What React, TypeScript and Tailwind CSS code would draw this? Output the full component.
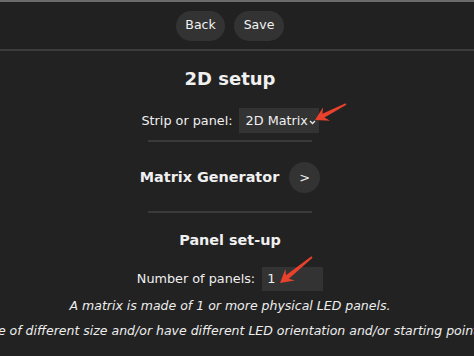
import React from "react";

function Arrow({ tip, tail }: { tip: [number, number]; tail: [number, number] }) {
  const dx = tail[0] - tip[0];
  const dy = tail[1] - tip[1];
  const len = Math.hypot(dx, dy);
  const ux = dx / len;
  const uy = dy / len;
  const nx = -uy;
  const ny = ux;
  const L = 13;
  const W = 7.5;
  const p = (a: number, b: number) => `${tip[0] + ux * a + nx * b},${tip[1] + uy * a + ny * b}`;
  const q = (b: number) => `${tail[0] + nx * b},${tail[1] + ny * b}`;
  const pts = [p(0, 0), p(L, W), p(L - 3.5, 2.2), q(0.9), q(-0.9), p(L - 3.5, -2.2), p(L, -W)].join(" ");
  return <polygon points={pts} fill="#e8412c" />;
}

export default function App() {
  return (
    <div className="w-[474px] h-[356px] overflow-hidden bg-[#222222] relative font-['DejaVu_Sans',Verdana,sans-serif] text-[#f0f0f0]">
      <div className="border-t-2 border-[#6b6b6b] border-b-2 border-b-[#3c3c3c] bg-[#212121]">
        <div className="w-[460px] h-[47px] flex items-center justify-center gap-[9px]">
          <button className="w-[49px] h-[30px] rounded-full bg-[#333333] text-[12.5px] text-[#f2f2f2]">Back</button>
          <button className="w-[50px] h-[30px] rounded-full bg-[#333333] text-[12.5px] text-[#f2f2f2]">Save</button>
        </div>
      </div>
      <div className="w-[460px] flex flex-col items-center">
        <div className="mt-[17px] text-[18px] leading-[22px] font-bold">2D setup</div>
        <div className="mt-[18px] flex items-center gap-[6px] text-[12.8px]">
          <span>Strip or panel:</span>
          <div className="w-[80px] h-[25px] bg-[#333333] flex items-center pl-[7px]">
            <span>2D Matrix</span>
            <svg width="7" height="5" viewBox="0 0 7 5" className="ml-[1px] mt-[3px]">
              <path d="M1 1 L3.5 3.5 L6 1" stroke="#e8e8e8" strokeWidth="1.3" fill="none" />
            </svg>
          </div>
        </div>
        <div className="mt-[7px] w-[164px] h-[2px] bg-[#3a3a3a]" />
        <div className="mt-[20px] flex items-center gap-[10px]">
          <span className="text-[14.4px] font-bold">Matrix Generator</span>
          <div className="w-[31px] h-[31px] rounded-full bg-[#333333] flex items-center justify-center text-[13px]">&gt;</div>
        </div>
        <div className="mt-[18px] w-[164px] h-[2px] bg-[#3a3a3a]" />
        <div className="mt-[18px] text-[14.4px] leading-[18px] font-bold">Panel set-up</div>
        <div className="mt-[18px] flex items-center gap-[7px] text-[12.8px]">
          <span>Number of panels:</span>
          <div className="w-[61px] h-[24px] bg-[#333333] flex items-center pl-[5px]">1</div>
        </div>
        <div className="mt-[2px] italic text-[12.5px] leading-[25px] text-[#eeeeee] flex flex-col items-center">
          <div className="whitespace-nowrap">A matrix is made of 1 or more physical LED panels.</div>
          <div className="whitespace-nowrap">Each panel can be of different size and/or have different LED orientation and/or starting point and/or layout.</div>
        </div>
      </div>
      <svg className="absolute left-0 top-0 pointer-events-none" width="474" height="356">
        <Arrow tip={[315, 120]} tail={[346, 104]} />
        <Arrow tip={[280, 283]} tail={[312, 257]} />
      </svg>
    </div>
  );
}
